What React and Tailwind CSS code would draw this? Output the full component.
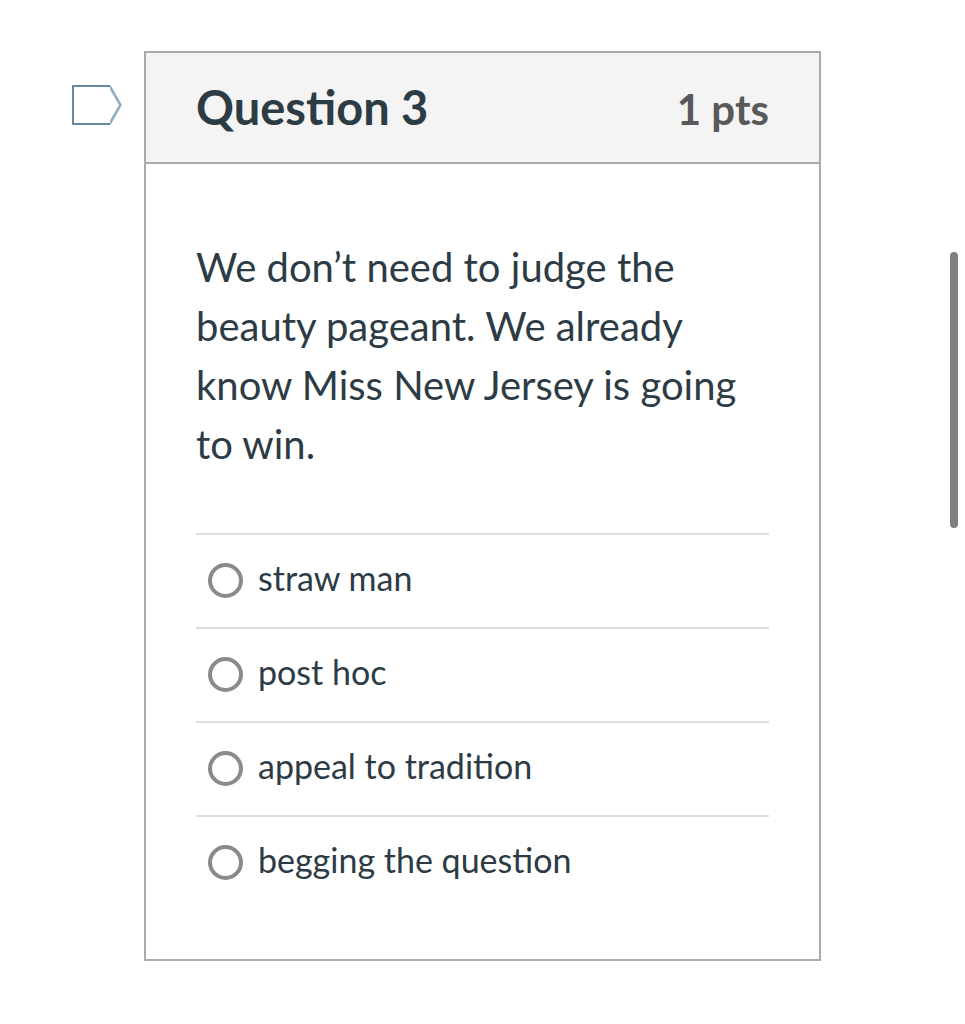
import React, { useState } from 'react';

const question = {
  title: 'Question 3',
  points: '1 pts',
  text: 'We don’t need to judge the beauty pageant. We already know Miss New Jersey is going to win.',
  answers: ['straw man', 'post hoc', 'appeal to tradition', 'begging the question'],
};

const FlagButton = () => {
  const [flagged, setFlagged] = useState(false);

  return (
    <button
      type="button"
      aria-label="Flag question"
      aria-pressed={flagged}
      onClick={() => setFlagged(!flagged)}
      className="mt-8 h-11 w-13 shrink-0"
    >
      <svg viewBox="0 0 52 44" className="h-11 w-13" aria-hidden="true">
        <path
          d="M39.5 3L50.5 22L39.5 41"
          fill={flagged ? '#fbd65b' : '#ffffff'}
          stroke="#8fb0c4"
          strokeWidth="2.6"
        />
        <path
          d="M40 3H3V41H40"
          fill={flagged ? '#fbd65b' : '#ffffff'}
          stroke="#67899d"
          strokeWidth="2"
        />
      </svg>
    </button>
  );
};

const Answer = ({ label, selected, onSelect }) => (
  <label className="flex h-[94px] items-start gap-[15px] border-t-2 border-[#dddddd] pt-5 pl-3 text-[34px] leading-[46px]">
    <input
      type="radio"
      name="answer"
      checked={selected}
      onChange={onSelect}
      className="mt-2 size-[35px] shrink-0 appearance-none rounded-full border-4 border-[#8a8a8a] bg-white checked:border-[10px] checked:border-[#0075ff]"
    />
    <span>{label}</span>
  </label>
);

const App = () => {
  const [selected, setSelected] = useState(null);

  return (
    <div className="relative min-h-screen bg-white font-[Lato,sans-serif] text-[#2d3b45]">
      <main className="flex items-start gap-[22px] pt-[51px] pr-36 pb-[60px] pl-[70px]">
        <FlagButton />

        <section className="min-w-0 flex-1 border-2 border-[#aaaaaa]">
          <header className="flex items-baseline justify-between border-b-2 border-[#aaaaaa] bg-[#f4f4f4] px-[50px] py-6">
            <h1 className="text-[47px] leading-[61px] font-bold">{question.title}</h1>
            <span className="text-[42px] leading-[50px] font-bold text-[#595959]">{question.points}</span>
          </header>

          <div className="px-[50px] pt-[74px] pb-[50px]">
            <p className="text-[40px] leading-[59px]">{question.text}</p>

            <fieldset aria-label="Answers" className="mt-[59px]">
              {question.answers.map((label) => (
                <Answer
                  key={label}
                  label={label}
                  selected={selected === label}
                  onSelect={() => setSelected(label)}
                />
              ))}
            </fieldset>
          </div>
        </section>
      </main>

      {/* Overlay scrollbar thumb */}
      <div className="absolute top-[252px] right-[7px] h-[276px] w-2 rounded-full bg-[#7f7f7f]" />
    </div>
  );
};

export default App;
